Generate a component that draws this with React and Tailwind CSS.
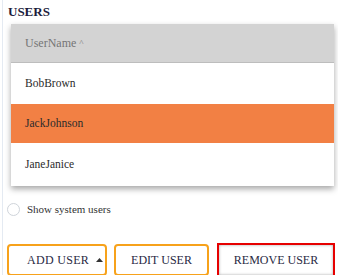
export default function App() {
  const users = [
    { name: "BobBrown", selected: false, h: "h-[41px]" },
    { name: "JackJohnson", selected: true, h: "h-[39px]" },
    { name: "JaneJanice", selected: false, h: "h-[43px]" },
  ];

  return (
    <div className="w-[338px] h-[275px] overflow-hidden bg-white pl-[2px] font-['Liberation_Serif',serif]">
      <div className="h-full border-l border-[#e4eaf2] pl-[4px]">
        {/* Title */}
        <div className="h-[21px] pt-[4px] pl-px text-[13px] leading-[15px] font-bold text-[#1c1c3c]">USERS</div>

        {/* Users table */}
        <div className="ml-[4px] mt-[3px] w-[323px] bg-white shadow-[0_3px_6px_rgba(0,0,0,0.35)]">
          <div className="h-[39px] flex items-center pl-[14px] bg-[#d3d3d3] border-b border-[#bdbdbd] text-[12px] text-[#757575]">
            UserName
            <span className="ml-[3px] text-[9px] leading-none">^</span>
          </div>
          {users.map((u) => (
            <div
              key={u.name}
              className={`${u.h} flex items-center pl-[14px] text-[11.5px] text-[#2b2b2b] ${u.selected ? "bg-[#f28044]" : "bg-white"}`}
            >
              {u.name}
            </div>
          ))}
        </div>

        {/* Show system users */}
        <div className="mt-[15px] flex items-center gap-[7px]">
          <span className="w-[13px] h-[13px] rounded-full border border-[#cfd4da] bg-white"></span>
          <span className="text-[11px] text-[#333]">Show system users</span>
        </div>

        {/* Buttons */}
        <div className="mt-[25px] flex items-center gap-[7px]">
          <button className="w-[100px] h-[32px] flex items-center whitespace-nowrap pl-[18px] rounded-[4px] border-2 border-[#f7a21b] bg-white text-[12px] tracking-[0.3px] text-[#2a2a44]">
            ADD USER
            <svg className="ml-[7px]" width="7" height="4" viewBox="0 0 7 4">
              <path d="M0 4 L3.5 0 L7 4 Z" fill="#333" />
            </svg>
          </button>
          <button className="w-[95px] h-[32px] flex items-center justify-center whitespace-nowrap rounded-[4px] border-2 border-[#f7a21b] bg-white text-[12px] text-[#2a2a44]">
            EDIT USER
          </button>
          <button className="ml-px w-[118px] h-[34px] flex items-center justify-center whitespace-nowrap border-2 border-[#e60000] bg-white shadow-[inset_0_0_3px_rgba(0,0,0,0.35)] text-[12px] text-[#2a2a44]">
            REMOVE USER
          </button>
        </div>
      </div>
    </div>
  );
}
